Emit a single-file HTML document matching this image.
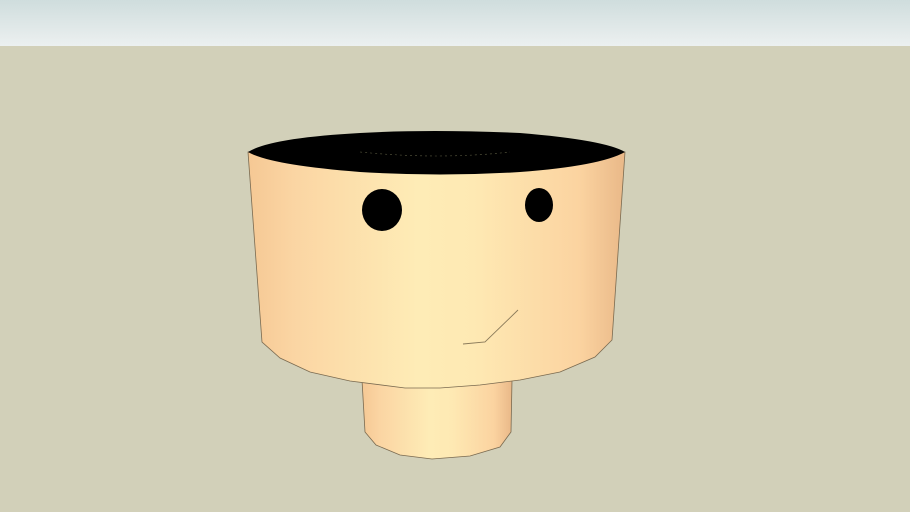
<!DOCTYPE html>
<html><head><style>html,body{margin:0;padding:0;overflow:hidden}svg{display:block}</style></head>
<body>
<svg width="910" height="512" viewBox="0 0 910 512" xmlns="http://www.w3.org/2000/svg">
<defs>
<linearGradient id="sky" x1="0" y1="0" x2="0" y2="1">
<stop offset="0" stop-color="#cfdddd"/><stop offset="1" stop-color="#ecf0f0"/></linearGradient>
<linearGradient id="skin" x1="0" y1="0" x2="1" y2="0">
<stop offset="0" stop-color="#f5c894"/><stop offset="0.12" stop-color="#fbd5a3"/>
<stop offset="0.45" stop-color="#feecb6"/><stop offset="0.6" stop-color="#fee9b3"/>
<stop offset="0.88" stop-color="#fbd3a0"/><stop offset="1" stop-color="#e9b888"/></linearGradient>
</defs>
<rect width="910" height="46" fill="url(#sky)"/>
<rect y="46" width="910" height="466" fill="#d2d0b9"/>
<!-- neck -->
<path d="M362,380 L512,380 L511,432 L500,447 L470,456 L432,459 L400,455 L376,445 L365,432 Z" fill="url(#skin)" stroke="#7a6a50" stroke-width="0.8"/>
<!-- body -->
<path d="M248,152 L625,152 L612,340 L595,357 L560,372 L520,380 L480,385 L440,388 L405,388 L350,381 L310,372 L280,358 L262,342 Z" fill="url(#skin)" stroke="#7a6a50" stroke-width="0.8"/>
<!-- top -->
<path d="M248,152 Q270,138 360,133 Q430,129 520,133 Q605,140 625,152 Q600,166 520,172 Q440,177 360,172 Q270,165 248,152 Z" fill="#000"/>
<path d="M360,152 Q440,160 510,152" fill="none" stroke="#5a5a40" stroke-width="0.6" stroke-dasharray="2 3"/>
<!-- eyes -->
<ellipse cx="382" cy="210" rx="20" ry="21" fill="#000"/>
<ellipse cx="539" cy="205" rx="14" ry="17" fill="#000"/>
<!-- mouth -->
<path d="M463,344 L485,342 L518,310" fill="none" stroke="#8a7a5a" stroke-width="0.9"/>
</svg>
</body></html>
